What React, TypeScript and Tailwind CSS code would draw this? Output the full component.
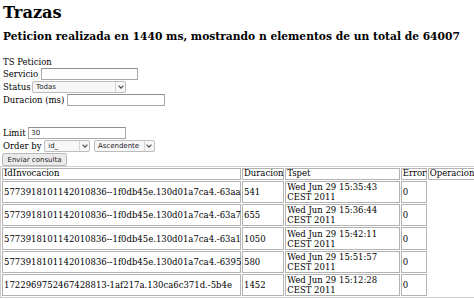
import React from 'react'

type Row = { id: string; dur: string; ts: string; err: string }

const rows: Row[] = [
  { id: '5773918101142010836--1f0db45e.130d01a7ca4.-63aa', dur: '541', ts: 'Wed Jun 29 15:35:43 CEST 2011', err: '0' },
  { id: '5773918101142010836--1f0db45e.130d01a7ca4.-63a7', dur: '655', ts: 'Wed Jun 29 15:36:44 CEST 2011', err: '0' },
  { id: '5773918101142010836--1f0db45e.130d01a7ca4.-63a1', dur: '1050', ts: 'Wed Jun 29 15:42:11 CEST 2011', err: '0' },
  { id: '5773918101142010836--1f0db45e.130d01a7ca4.-6395', dur: '580', ts: 'Wed Jun 29 15:51:57 CEST 2011', err: '0' },
  { id: '1722969752467428813-1af217a.130ca6c371d.-5b4e', dur: '1452', ts: 'Wed Jun 29 15:12:28 CEST 2011', err: '0' },
]

function Chevron() {
  return (
    <svg width="6" height="4" viewBox="0 0 6 4" className="block">
      <polyline points="0.6,0.6 3,3.2 5.4,0.6" fill="none" stroke="#4a4a4a" strokeWidth="1.1" />
    </svg>
  )
}

// fake <select> so the arrow and divider look like the old gtk theme
function Select({ value, className }: { value: string; className: string }) {
  return (
    <div className={`flex h-[12px] items-stretch rounded-[2px] border border-[#bdbdbd] bg-[#f7f7f7] font-['DejaVu_Sans',sans-serif] text-[7px] leading-[10px] ${className}`}>
      <span className="flex flex-1 items-center pl-[3px] text-[#222]">{value}</span>
      <span className="flex w-[10px] items-center justify-center border-l border-[#d4d4d4]">
        <Chevron />
      </span>
    </div>
  )
}

function Input({ value = '', className }: { value?: string; className: string }) {
  return (
    <input
      readOnly
      value={value}
      className={`h-[12px] border border-[#a8a8a8] border-t-[#8f8f8f] bg-white pl-[2px] font-['DejaVu_Sans',sans-serif] text-[7px] leading-[10px] text-[#222] outline-none ${className}`}
    />
  )
}

export default function App() {
  return (
    <div className="h-[299px] w-[474px] overflow-hidden bg-white font-['DejaVu_Serif',serif] text-[8.5px] leading-[10px] text-black">
      <h1 className="pl-[3px] pt-[5px] text-[16.2px] font-bold leading-[16px]">Trazas</h1>
      <h3 className="mt-[10px] pl-[3px] text-[10.7px] font-bold leading-[12px] whitespace-nowrap">
        Peticion realizada en 1440 ms, mostrando n elementos de un total de 64007
      </h3>

      <form className="mt-[14px]" onSubmit={(e) => e.preventDefault()}>
        <div className="pl-[3px]">TS Peticion</div>
        <div className="flex h-[13.3px] items-center gap-[2.7px] pl-[3px]">
          <span>Servicio</span>
          <Input className="w-[97px]" />
        </div>
        <div className="flex h-[13.3px] items-center gap-[1.5px] pl-[3px]">
          <span>Status</span>
          <Select value="Todas" className="w-[94px]" />
        </div>
        <div className="flex h-[13.3px] items-center gap-[2.7px] pl-[3px]">
          <span>Duracion (ms)</span>
          <Input className="w-[98px]" />
        </div>

        <div className="h-[19.5px]" />

        <div className="flex h-[13.3px] items-center gap-[2.7px] pl-[3px]">
          <span>Limit</span>
          <Input value="30" className="w-[98px]" />
        </div>
        <div className="flex h-[13.3px] items-center gap-[2.7px] pl-[3px]">
          <span>Order by</span>
          <Select value="id_" className="w-[46px]" />
          <Select value="Ascendente" className="ml-[1px] w-[61px]" />
        </div>
        <div className="flex h-[13.3px] items-center pl-[2px]">
          <button
            type="submit"
            className="h-[12.5px] w-[65px] rounded-[2px] border border-[#b9b9b9] bg-[#ebebeb] font-['DejaVu_Sans',sans-serif] text-[7px] leading-[10px] text-[#222]"
          >
            Enviar consulta
          </button>
        </div>
      </form>

      <table className="w-[478px] table-fixed border-separate border-spacing-[1px] border border-[#cdcdcd] text-left">
        <colgroup>
          <col className="w-[238px]" />
          <col className="w-[42px]" />
          <col className="w-[114px]" />
          <col className="w-[26px]" />
          <col className="w-[48px]" />
        </colgroup>
        <thead>
          <tr>
            {['IdInvocacion', 'Duracion', 'Tspet', 'Error', 'Operacion'].map((h) => (
              <td key={h} className="h-[11.5px] border border-[#b3b3b3] px-[1px] py-0 align-middle leading-[9.5px] whitespace-nowrap">
                {h}
              </td>
            ))}
          </tr>
        </thead>
        <tbody>
          {rows.map((r) => (
            <tr key={r.id}>
              <td className="h-[22.3px] border border-[#b3b3b3] px-[1px] py-0 align-middle whitespace-nowrap">{r.id}</td>
              <td className="border border-[#b3b3b3] px-[1px] py-0 align-middle">{r.dur}</td>
              <td className="border border-[#b3b3b3] px-[1px] py-0 align-middle">{r.ts}</td>
              <td className="border border-[#b3b3b3] px-[1px] py-0 align-middle">{r.err}</td>
              <td className="p-0"></td>
            </tr>
          ))}
        </tbody>
      </table>
    </div>
  )
}
